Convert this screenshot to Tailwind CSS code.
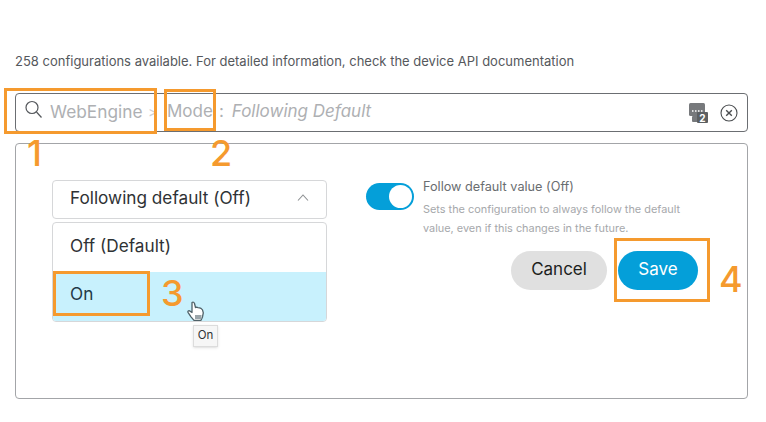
<!DOCTYPE html>
<html lang="en">
  <head>
    <meta charset="UTF-8" />
    <title>WebEngine Mode</title>
    <script src="https://cdn.jsdelivr.net/npm/@tailwindcss/browser@4"></script>
  </head>
  <body class="bg-white font-['Inter','Liberation_Sans',sans-serif]">
    <div class="relative w-[766px] h-[422px] overflow-hidden pt-[53px] px-[15px]">
      <p class="text-[13px] leading-[16px] text-[#55585c]">258 configurations available. For detailed information, check the device API documentation</p>

      <!-- search bar -->
      <div class="mt-[24px] w-[733px] h-[39px] border border-[#6b6e72] rounded-[4px] flex items-center pl-[8px] pr-[9px] pb-[2px]">
        <svg class="w-[19px] h-[19px] text-[#55585c] -mt-[4px]" viewBox="0 0 19 19" fill="none" stroke="currentColor" stroke-width="1.2">
          <circle cx="8" cy="7.5" r="6" />
          <path d="M12.5 12l5 5.5" />
        </svg>
        <span class="ml-[7px] w-[93px] text-[17.3px] text-[#aeb0b3]">WebEngine</span>
        <span class="ml-[5px] w-[12px] text-[14px] text-[#cfd0d2]">&gt;</span>
        <span class="ml-[7px] text-[17px] text-[#aeb0b3]">Mode</span>
        <span class="ml-[6px] text-[17px] text-[#aeb0b3]">:</span>
        <span class="ml-[8px] text-[17px] italic text-[#aeb0b3]">Following Default</span>
        <svg class="ml-auto w-[19px] h-[20px] mt-[2px]" viewBox="0 0 19 20">
          <rect x="0" y="0" width="16" height="13" rx="1.5" fill="#77797c" />
          <path d="M3 8h1.5M6 8h1.5M9 8h1.5M12 8h1.5" stroke="#fff" stroke-width="1.5" />
          <rect x="3" y="13" width="10" height="6" rx="1" fill="#77797c" />
          <rect x="8" y="9" width="11" height="11" rx="1" fill="#5c5f62" />
          <text x="13.5" y="18.5" font-size="10" font-weight="700" text-anchor="middle" fill="#fff" font-family="Inter">2</text>
        </svg>
        <svg class="ml-[12px] w-[18px] h-[18px] text-[#4a4d50] mt-[2px]" viewBox="0 0 18 18" fill="none" stroke="currentColor" stroke-width="1.1">
          <circle cx="9" cy="9" r="8" />
          <path d="M6.2 6.2l5.6 5.6M11.8 6.2l-5.6 5.6" stroke-width="1.4" />
        </svg>
      </div>

      <!-- panel -->
      <div class="mt-[11px] w-[733px] h-[256px] border border-[#a3a5a8] rounded-[4px] pt-[36px] pl-[36px] flex">
        <div class="w-[275px]">
          <div class="h-[39px] border border-[#d6d7d9] rounded-[4px] flex items-center justify-between pl-[17px] pr-[17px] pb-[4px] text-[17.2px] text-[#2f3235]">
            <span>Following default (Off)</span>
            <svg class="w-[12px] h-[7px] text-[#8d9093]" viewBox="0 0 12 7" fill="none" stroke="currentColor" stroke-width="1.1"><path d="M1 6.5L6 1l5 5.5" /></svg>
          </div>
          <div class="mt-[3px] h-[100px] border border-[#d6d7d9] rounded-[4px] overflow-hidden text-[17.2px] text-[#2f3235]">
            <div class="h-[49px] flex items-center pl-[17px] pb-[4px]">Off (Default)</div>
            <div class="h-[49px] flex items-center pl-[17px] pb-[5px] bg-[#c8f1fd] text-[#1f3a47]">On</div>
          </div>
        </div>
        <div class="ml-[39px] w-[340px] flex flex-col">
          <div class="flex">
            <div class="mt-[3px] w-[48px] h-[27px] rounded-full bg-[#049fd9] flex items-center justify-end pr-[2px]">
              <div class="w-[23px] h-[23px] rounded-full bg-white"></div>
            </div>
            <div class="ml-[9px]">
              <div class="text-[12.7px] leading-[16px] text-[#6a6d70] -mt-[1px]">Follow default value (Off)</div>
              <div class="mt-[5px] text-[10.9px] leading-[19px] text-[#a6a8ab]">Sets the configuration to always follow the default<br />value, even if this changes in the future.</div>
            </div>
          </div>
          <div class="mt-[13px] flex gap-[11px] pl-[145px]">
            <button class="w-[96px] h-[39px] rounded-full bg-[#e0e0e0] text-[17px] text-[#1c1e20] pb-[2px]">Cancel</button>
            <button class="w-[80px] h-[39px] rounded-full bg-[#049fd9] text-[17px] text-white pb-[2px]">Save</button>
          </div>
        </div>
      </div>

      <!-- annotations over the capture -->
      <div class="absolute left-[4px] top-[88px] w-[153px] h-[46px] border-[3px] border-[#f59a2e]"></div>
      <div class="absolute left-[164px] top-[89px] w-[52px] h-[42px] border-[3px] border-[#f59a2e]"></div>
      <div class="absolute left-[53px] top-[271px] w-[97px] h-[45px] border-[3px] border-[#f59a2e]"></div>
      <div class="absolute left-[614px] top-[238px] w-[96px] h-[64px] border-[3px] border-[#f59a2e]"></div>
      <span class="absolute left-[27px] top-[133px] text-[36px] leading-[40px] font-medium text-[#f59a2e]">1</span>
      <span class="absolute left-[210px] top-[133px] text-[36px] leading-[40px] font-medium text-[#f59a2e]">2</span>
      <span class="absolute left-[161px] top-[273px] text-[36px] leading-[40px] font-medium text-[#f59a2e]">3</span>
      <span class="absolute left-[719px] top-[259px] text-[36px] leading-[40px] font-medium text-[#f59a2e]">4</span>

      <!-- pointer -->
      <svg class="absolute left-[187px] top-[301px] w-[19px] h-[21px]" viewBox="0 0 19 21">
        <path d="M5 1.5c1-.8 2.2-.2 2.5 1l1 4 1-.3 1.5.4 1.5.2 1.5.6 1.5 1.5.8 3-.8 4-1.5 3.4H7l-3-3.5-3-4.5c-.4-1 .6-2 1.6-1.4l2.4 1.6z" fill="#fff" stroke="#4f6168" stroke-width="1.3" stroke-linejoin="round" />
        <rect x="8" y="14" width="6.5" height="4" fill="#9aa5aa" />
      </svg>
      <div class="absolute left-[193px] top-[325px] w-[25px] h-[22px] bg-[#f6f6f6] border border-[#dcdcdc] shadow-sm flex items-center justify-center text-[11.5px] text-[#2f3235]">On</div>
    </div>
  </body>
</html>
